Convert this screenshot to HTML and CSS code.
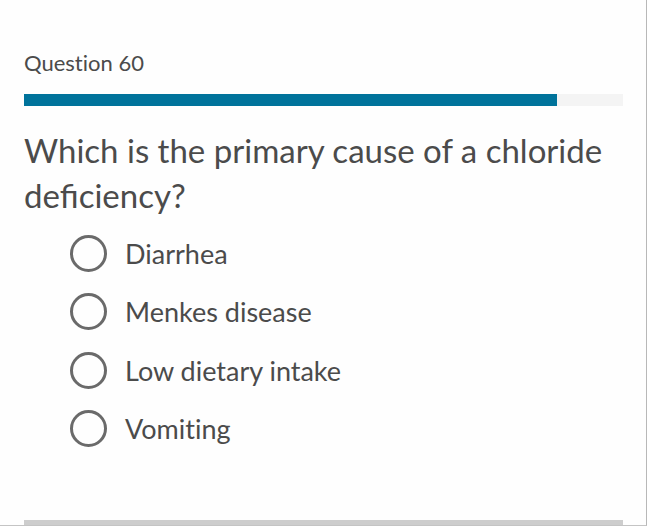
FILE: index.html
```html
<!DOCTYPE html>
<html>
<head>
<meta charset="utf-8">
<link rel="stylesheet" href="styles.css">
</head>
<body>
<div class="frame">
  <div class="content">
    <div class="qnum">Question 60</div>
    <div class="progress"><div class="fill" style="width:89%"></div></div>
    <div class="qtext">Which is the primary cause of a chloride deficiency?</div>
    <ul class="options">
      <li class="opt"><span class="radio"></span><span class="label">Diarrhea</span></li>
      <li class="opt"><span class="radio"></span><span class="label">Menkes disease</span></li>
      <li class="opt"><span class="radio"></span><span class="label">Low dietary intake</span></li>
      <li class="opt"><span class="radio"></span><span class="label">Vomiting</span></li>
    </ul>
  </div>
  <div class="scrollbar"><div class="thumb"></div></div>
</div>
</body>
</html>
```
FILE: styles.css
```css
html, body {
  margin: 0;
  padding: 0;
  background: #ffffff;
}
.frame {
  width: 646px;
  height: 525px;
  border-right: 1px solid #b8b8b8;
  border-bottom: 1px solid #c4c4c4;
  background: #fefefe;
  display: flex;
  flex-direction: column;
  font-family: Lato, "Open Sans", sans-serif;
  color: #4b4b4b;
}
.content {
  flex: 1;
  padding: 0 23px 0 24px;
}
.qnum {
  font-size: 22px;
  line-height: 28px;
  margin-top: 49px;
  font-variant-ligatures: none;
  font-feature-settings: "liga" 0, "dlig" 0;
}
.progress {
  margin-top: 17px;
  height: 12px;
  background: #f4f4f4;
}
.fill {
  height: 100%;
  background: #00739b;
}
.qtext {
  margin-top: 22px;
  font-size: 33px;
  line-height: 45px;
}
.options {
  list-style: none;
  margin: 6px 0 0 0;
  padding: 0 0 0 46px;
}
.opt {
  display: flex;
  align-items: center;
  height: 58.5px;
}
.radio {
  width: 31px;
  height: 31px;
  border: 3px solid #6a6a6a;
  border-radius: 50%;
  flex: none;
}
.label {
  margin-left: 18px;
  font-size: 27px;
  font-variant-ligatures: none;
  font-feature-settings: "liga" 0, "dlig" 0;
}
.scrollbar {
  height: 5px;
  padding: 0 23px 0 24px;
}
.thumb {
  height: 5px;
  background: #cdcdcd;
}
```
